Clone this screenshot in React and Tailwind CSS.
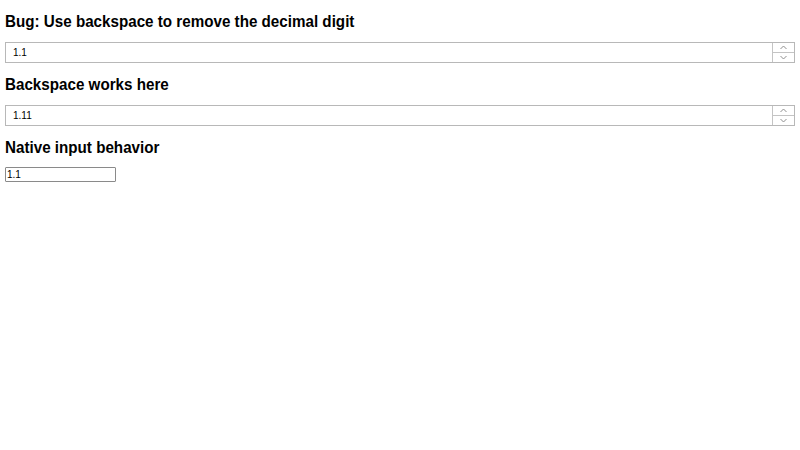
import React from 'react';

function Spinner() {
  return (
    <div className="flex w-[22px] flex-col border-l border-[#c4c4c4]">
      <div className="flex flex-1 items-center justify-center border-b border-[#c4c4c4]">
        <svg width="7" height="5" viewBox="0 0 7 5" fill="none">
          <path d="M0.5 4L3.5 1L6.5 4" stroke="#8f8f8f" strokeWidth="1" />
        </svg>
      </div>
      <div className="flex flex-1 items-center justify-center">
        <svg width="7" height="5" viewBox="0 0 7 5" fill="none">
          <path d="M0.5 1L3.5 4L6.5 1" stroke="#8f8f8f" strokeWidth="1" />
        </svg>
      </div>
    </div>
  );
}

function NumberBox({ value }) {
  return (
    <div className="flex h-[21px] w-full border border-[#b8b8b8] bg-white">
      <div className="flex flex-1 items-center pl-[7px] text-[10px] leading-none text-black">
        {value}
      </div>
      <Spinner />
    </div>
  );
}

function Heading({ children, height }) {
  return (
    <div className={`flex items-center ${height}`}>
      <h2 className="origin-center scale-y-[1.1] text-[15.2px] font-bold leading-none text-black">
        {children}
      </h2>
    </div>
  );
}

export default function App() {
  return (
    <div className="min-h-[450px] bg-white px-[5px] font-['Liberation_Sans',Arial,sans-serif]">
      <Heading height="h-[42px]">Bug: Use backspace to remove the decimal digit</Heading>
      <NumberBox value="1.1" />
      <Heading height="h-[42px]">Backspace works here</Heading>
      <NumberBox value="1.11" />
      <Heading height="h-[41px]">Native input behavior</Heading>
      <div className="flex h-[15px] w-[111px] items-center rounded-[1px] border border-[#8a8a8a] pl-[1px] text-[10px] leading-none text-black">
        1.1
      </div>
    </div>
  );
}
